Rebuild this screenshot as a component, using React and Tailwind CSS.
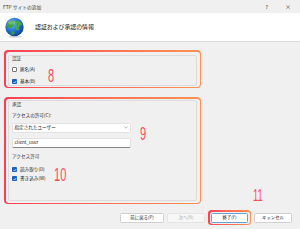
import React from 'react';

const font = { fontFamily: '"Noto Sans CJK JP", "Noto Sans", sans-serif' };

const Globe = () => (
    <svg width="21" height="21" viewBox="0 0 21 21">
        <defs>
            <radialGradient id="sea" cx="0.38" cy="0.32" r="0.75">
                <stop offset="0" stopColor="#6fb6ff" />
                <stop offset="0.55" stopColor="#1f6fd6" />
                <stop offset="1" stopColor="#0b3a8c" />
            </radialGradient>
        </defs>
        <ellipse cx="11" cy="19.6" rx="7" ry="1.1" fill="#000" opacity="0.15" />
        <circle cx="10.5" cy="10" r="9.2" fill="url(#sea)" />
        {/* continents */}
        <path d="M4 5.5 C6 3.5 9 3 10.5 4.2 C11 5.6 9.6 6.2 9.8 7.6 C10 9 8.4 9.4 7.6 10.6 C7 12 5.2 12.2 4.2 11 C3 9.6 2.8 7.4 4 5.5 Z" fill="#3fa33a" />
        <path d="M12.6 3.6 C14.8 3.8 17.2 5.4 18.2 7.6 C17.4 8.6 15.8 8 15 9.2 C14.4 10.4 15.6 11.8 14.6 13 C13.6 14.2 12.2 13.2 12 11.8 C11.8 10.2 12.8 9.2 12.2 8 C11.6 6.6 11.6 5 12.6 3.6 Z" fill="#46ab3c" />
        <path d="M7.4 14.2 C8.8 13.6 10.4 14.4 10.8 15.8 C10.6 17.2 9 18.4 7.6 17.8 C6.6 16.8 6.6 15 7.4 14.2 Z" fill="#3b9a35" />
        <ellipse cx="7.6" cy="5.6" rx="3.6" ry="2" fill="#fff" opacity="0.25" />
    </svg>
);

const Check = ({ checked, label }) => (
    <div className="flex items-center h-[5px] gap-[3px]">
        {checked ? (
            <span className="w-[5px] h-[5px] rounded-[1px] bg-[#1a62c4] flex items-center justify-center">
                <svg width="4" height="4" viewBox="0 0 4 4">
                    <polyline points="0.6,2 1.6,3 3.4,0.9" fill="none" stroke="#fff" strokeWidth="0.7" />
                </svg>
            </span>
        ) : (
            <span className="w-[5px] h-[5px] rounded-[1px] bg-white border-[0.6px] border-[#777]" />
        )}
        <span className="text-[4.6px] leading-[5px] text-[#222]">{label}</span>
    </div>
);

const Mark = ({ children, className }) => (
    <span
        className={`absolute text-[19px] leading-[19px] text-[#ff4a5e] origin-left scale-x-[0.58] ${className}`}
        style={{ fontFamily: '"Liberation Sans", sans-serif' }}
    >
        {children}
    </span>
);

const Highlight = ({ className, children }) => (
    <div className={`bg-linear-to-r from-[#ff3d55] to-[#ff9255] p-[1.5px] rounded-[4px] ${className}`}>
        <div className="bg-[#f0f0f0] rounded-[3px] h-full relative flow-root">{children}</div>
    </div>
);

const App = () => {
    return (
        <div className="w-[300px] h-[229px] bg-[#f0f0f0] overflow-hidden relative flex flex-col" style={font}>
            {/* title bar */}
            <div className="h-[13px] flex items-center px-[3px] text-[4.8px] text-[#333]">
                <span>FTP サイトの追加</span>
                <span className="ml-auto mr-[17px] text-[5px]">?</span>
                <span className="mr-[6px] text-[6px] text-[#444]">×</span>
            </div>

            {/* header */}
            <div className="h-[29px] bg-white border-b border-[#dcdcdc] flex items-center">
                <div className="ml-[4px] mt-[1px]">
                    <Globe />
                </div>
                <span className="ml-[10px] text-[5.9px] text-[#111]">認証および承認の情報</span>
            </div>

            {/* body */}
            <div className="flex flex-col pl-[4px] pt-[8px]">
                <Highlight className="w-[197px] h-[38px]">
                    <div className="mx-[2.5px] mt-[3.5px] h-[31px] border border-[#dcdcdc] rounded-[2px] pl-[3px]">
                        <div className="text-[4.6px] leading-[5px] text-[#333]">認証</div>
                        <div className="mt-[6px]">
                            <Check label="匿名(A)" />
                        </div>
                        <div className="mt-[7px]">
                            <Check checked label="基本(B)" />
                        </div>
                    </div>
                    <Mark className="left-[42.5px] top-[14.5px]">8</Mark>
                </Highlight>

                <Highlight className="w-[197px] h-[107px] mt-[9px]">
                    <div className="mx-[2.5px] mt-[1.5px] h-[101px] border border-[#dcdcdc] rounded-[2px] pl-[3px]">
                        <div className="mt-[0.5px] text-[4.6px] leading-[5px] text-[#333]">承認</div>
                        <div className="mt-[6.7px] text-[4.6px] leading-[5px] text-[#222]">アクセスの許可(C):</div>
                        <div className="mt-[4.5px] w-[119px] h-[10px] bg-white border-[0.6px] border-[#e2e2e2] rounded-[1.5px] flex items-center pl-[1.5px] pr-[2px]">
                            <span className="text-[4.6px] text-[#222]">指定されたユーザー</span>
                            <svg className="ml-auto" width="4" height="3" viewBox="0 0 4 3">
                                <polyline points="0.4,0.6 2,2.2 3.6,0.6" fill="none" stroke="#666" strokeWidth="0.5" />
                            </svg>
                        </div>
                        <div className="mt-[5px] w-[119px] h-[10px] bg-white border-[0.6px] border-[#e2e2e2] border-b-[#8a8a8a] rounded-[1.5px] flex items-center pl-[1.5px]">
                            <span className="text-[4.6px] text-[#222]">client_user</span>
                        </div>
                        <div className="mt-[6.8px] text-[4.6px] leading-[5px] text-[#333]">アクセス許可</div>
                        <div className="mt-[8px]">
                            <Check checked label="読み取り(D)" />
                        </div>
                        <div className="mt-[4px]">
                            <Check checked label="書き込み(W)" />
                        </div>
                    </div>
                    <Mark className="left-[134.5px] top-[25.5px]">9</Mark>
                    <Mark className="left-[48.5px] top-[66px]">10</Mark>
                </Highlight>

                {/* buttons */}
                <div className="flex items-center mt-[6px] pl-[116px] h-[15px] text-[4.4px]">
                    <button className="w-[44px] h-[10px] bg-white border-[0.6px] border-[#d0d0d0] rounded-[1.5px] text-[#222]">前に戻る(P)</button>
                    <button className="ml-[3px] w-[38px] h-[10px] bg-[#f7f7f7] border-[0.6px] border-[#e4e4e4] rounded-[1.5px] text-[#b0b0b0]">次へ(N)</button>
                    <div className="ml-[3px] w-[43px] h-[15px] bg-linear-to-r from-[#ff3d55] to-[#ff9255] p-[1.5px] rounded-[3.5px]">
                        <div className="w-full h-full bg-[#f0f0f0] rounded-[2.5px] flex items-center justify-center">
                            <button className="w-[37px] h-[10px] bg-white border-[0.8px] border-[#6a9fd8] rounded-[1.5px] text-[#222]">終了(F)</button>
                        </div>
                    </div>
                    <button className="ml-[3px] w-[38px] h-[10px] bg-white border-[0.6px] border-[#d0d0d0] rounded-[1.5px] text-[#222]">キャンセル</button>
                </div>
            </div>

            <span
                className="absolute left-[253px] top-[188px] text-[16px] leading-[16px] text-[#ff4a5e] origin-left scale-x-[0.58]"
                style={{ fontFamily: '"Liberation Sans", sans-serif' }}
            >
                11
            </span>
        </div>
    );
};

export default App;
